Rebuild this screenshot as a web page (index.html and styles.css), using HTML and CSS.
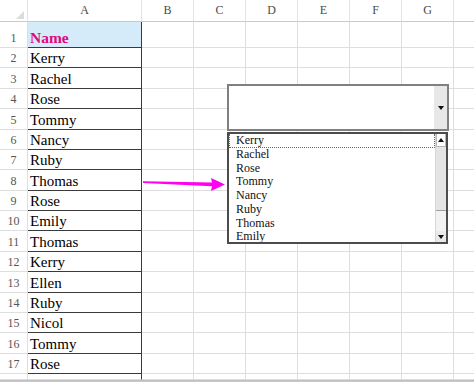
FILE: index.html
```html
<!DOCTYPE html>
<html>
<head>
<meta charset="utf-8">
<link rel="stylesheet" href="styles.css">
</head>
<body>
<div class="sheet">
  <div class="row hdr">
    <div class="corner"><span class="tri"></span></div>
    <div class="ch">A</div><div class="ch">B</div><div class="ch">C</div><div class="ch">D</div><div class="ch">E</div><div class="ch">F</div><div class="ch">G</div><div class="ch last"></div>
  </div>
  <div class="row r1">
    <div class="rh">1</div><div class="a title">Name</div>
    <div class="c"></div><div class="c"></div><div class="c"></div><div class="c"></div><div class="c"></div><div class="c"></div><div class="c last"></div>
  </div>
  <div class="row"><div class="rh">2</div><div class="a">Kerry</div><div class="c"></div><div class="c"></div><div class="c"></div><div class="c"></div><div class="c"></div><div class="c"></div><div class="c last"></div></div>
  <div class="row"><div class="rh">3</div><div class="a">Rachel</div><div class="c"></div><div class="c"></div><div class="c"></div><div class="c"></div><div class="c"></div><div class="c"></div><div class="c last"></div></div>
  <div class="row"><div class="rh">4</div><div class="a">Rose</div><div class="c"></div><div class="c"></div><div class="c"></div><div class="c"></div><div class="c"></div><div class="c"></div><div class="c last"></div></div>
  <div class="row"><div class="rh">5</div><div class="a">Tommy</div><div class="c"></div><div class="c"></div><div class="c"></div><div class="c"></div><div class="c"></div><div class="c"></div><div class="c last"></div></div>
  <div class="row"><div class="rh">6</div><div class="a">Nancy</div><div class="c"></div><div class="c"></div><div class="c"></div><div class="c"></div><div class="c"></div><div class="c"></div><div class="c last"></div></div>
  <div class="row"><div class="rh">7</div><div class="a">Ruby</div><div class="c"></div><div class="c"></div><div class="c"></div><div class="c"></div><div class="c"></div><div class="c"></div><div class="c last"></div></div>
  <div class="row"><div class="rh">8</div><div class="a">Thomas</div><div class="c"></div><div class="c"></div><div class="c"></div><div class="c"></div><div class="c"></div><div class="c"></div><div class="c last"></div></div>
  <div class="row"><div class="rh">9</div><div class="a">Rose</div><div class="c"></div><div class="c"></div><div class="c"></div><div class="c"></div><div class="c"></div><div class="c"></div><div class="c last"></div></div>
  <div class="row"><div class="rh">10</div><div class="a">Emily</div><div class="c"></div><div class="c"></div><div class="c"></div><div class="c"></div><div class="c"></div><div class="c"></div><div class="c last"></div></div>
  <div class="row"><div class="rh">11</div><div class="a">Thomas</div><div class="c"></div><div class="c"></div><div class="c"></div><div class="c"></div><div class="c"></div><div class="c"></div><div class="c last"></div></div>
  <div class="row"><div class="rh">12</div><div class="a">Kerry</div><div class="c"></div><div class="c"></div><div class="c"></div><div class="c"></div><div class="c"></div><div class="c"></div><div class="c last"></div></div>
  <div class="row"><div class="rh">13</div><div class="a">Ellen</div><div class="c"></div><div class="c"></div><div class="c"></div><div class="c"></div><div class="c"></div><div class="c"></div><div class="c last"></div></div>
  <div class="row"><div class="rh">14</div><div class="a">Ruby</div><div class="c"></div><div class="c"></div><div class="c"></div><div class="c"></div><div class="c"></div><div class="c"></div><div class="c last"></div></div>
  <div class="row"><div class="rh">15</div><div class="a">Nicol</div><div class="c"></div><div class="c"></div><div class="c"></div><div class="c"></div><div class="c"></div><div class="c"></div><div class="c last"></div></div>
  <div class="row"><div class="rh">16</div><div class="a">Tommy</div><div class="c"></div><div class="c"></div><div class="c"></div><div class="c"></div><div class="c"></div><div class="c"></div><div class="c last"></div></div>
  <div class="row"><div class="rh">17</div><div class="a">Rose</div><div class="c"></div><div class="c"></div><div class="c"></div><div class="c"></div><div class="c"></div><div class="c"></div><div class="c last"></div></div>
  <div class="row r18"><div class="rh">18</div><div class="a empty"></div><div class="c"></div><div class="c"></div><div class="c"></div><div class="c"></div><div class="c"></div><div class="c"></div><div class="c last"></div></div>
  <div class="bottombar"></div>

  <div class="combo">
    <div class="combo-field"></div>
    <div class="combo-btn"><span class="tri-down"></span></div>
  </div>

  <div class="listbox">
    <div class="items">
      <div class="item focus">Kerry</div>
      <div class="item">Rachel</div>
      <div class="item">Rose</div>
      <div class="item">Tommy</div>
      <div class="item">Nancy</div>
      <div class="item">Ruby</div>
      <div class="item">Thomas</div>
      <div class="item">Emily</div>
    </div>
    <div class="scrollbar">
      <div class="sb-up"><span class="tri-up"></span></div>
      <div class="sb-thumb"></div>
      <div class="sb-track"></div>
      <div class="sb-down"><span class="tri-down"></span></div>
    </div>
  </div>

  <svg class="arrow" width="90" height="20" viewBox="0 0 90 20">
    <path d="M3,7.3 L72,8.6 L71,4 L85,10.5 L71,17 L72,12.2 L3,9 Z" fill="#ff00f0"/>
  </svg>
</div>
</body>
</html>
```
FILE: styles.css
```css
html, body {
  margin: 0;
  padding: 0;
  background: #ffffff;
}
body {
  width: 474px;
  height: 382px;
  overflow: hidden;
  font-family: "Liberation Serif", "Times New Roman", serif;
}
.sheet {
  position: relative;
  width: 474px;
  height: 382px;
  display: flex;
  flex-direction: column;
}
.row {
  display: grid;
  grid-template-columns: 28px 114px 52px 52px 52px 52px 52px 52px 1fr;
  height: 20.375px;
  flex: none;
}
.row > div {
  box-sizing: border-box;
  border-right: 1px solid #dedede;
  border-bottom: 1px solid #dedede;
  min-width: 0;
  overflow: hidden;
}
.row > .last {
  border-right: none;
}
.hdr {
  height: 22px;
}
.hdr > div {
  border-bottom: 1px solid #c9c9c9;
  border-right: 1px solid #e3e3e3;
}
.corner {
  position: relative;
}
.tri {
  position: absolute;
  left: 16px;
  top: 11px;
  width: 0;
  height: 0;
  border-left: 8px solid transparent;
  border-bottom: 8px solid #dcdcdc;
}
.ch {
  display: flex;
  align-items: flex-end;
  justify-content: center;
  font-size: 12px;
  color: #4a4a4a;
  padding-bottom: 3px;
}
.rh {
  display: flex;
  align-items: flex-end;
  justify-content: center;
  font-size: 12px;
  color: #555555;
  padding-bottom: 1px;
}
.r1 {
  height: 26px;
}
.a {
  display: flex;
  align-items: flex-end;
  padding-left: 2px;
  font-size: 15px;
  line-height: 17px;
  color: #000000;
  white-space: nowrap;
}
.row > .a {
  border-right: 1px solid #3a3a3a;
  border-bottom: 1px solid #3a3a3a;
}
.row > .a.empty {
  border-bottom: 1px solid #dedede;
}
.title {
  background: #d5ebfa;
  color: #e2087d;
  font-weight: bold;
  font-size: 15.5px;
  padding-bottom: 1px;
}
.r18 {
  height: 6px;
}
.r18 > .rh {
  align-items: flex-start;
  padding-top: 2px;
  color: #888;
}
.bottombar {
  flex: 1;
  background: linear-gradient(#b9b9b9, #cfcfcf);
}

/* combo box (overlay control) */
.combo {
  position: absolute;
  left: 227px;
  top: 84px;
  width: 222px;
  height: 47px;
  box-sizing: border-box;
  border: 2px solid #808080;
  background: #ffffff;
  display: flex;
}
.combo-field {
  flex: 1;
}
.combo-btn {
  width: 13px;
  background: #e8e8e8;
  display: flex;
  align-items: center;
  justify-content: center;
}
.tri-down {
  width: 0;
  height: 0;
  border-left: 3px solid transparent;
  border-right: 3px solid transparent;
  border-top: 4px solid #111;
}
.tri-up {
  width: 0;
  height: 0;
  border-left: 3px solid transparent;
  border-right: 3px solid transparent;
  border-bottom: 4px solid #111;
}

/* list box (overlay control) */
.listbox {
  position: absolute;
  left: 227px;
  top: 132px;
  width: 221px;
  height: 112px;
  box-sizing: border-box;
  border: 2px solid #4c4c4c;
  background: #ffffff;
  display: flex;
}
.items {
  flex: 1;
  overflow: hidden;
}
.item {
  box-sizing: border-box;
  height: 13.75px;
  line-height: 13.75px;
  font-size: 12px;
  padding-left: 7px;
  color: #111;
  white-space: nowrap;
}
.item.focus {
  border: 1px dotted #666;
  border-top: none;
  padding-left: 6px;
  line-height: 12.75px;
}
.scrollbar {
  width: 10px;
  display: flex;
  flex-direction: column;
  border-left: 1px solid #d6d6d6;
}
.sb-up {
  height: 13px;
  box-sizing: border-box;
  border: 1px solid #b8b8b8;
  border-top: none;
  background: #ffffff;
  display: flex;
  align-items: center;
  justify-content: center;
}
.sb-thumb {
  height: 64px;
  box-sizing: border-box;
  background: #e4e4e4;
  border-bottom: 1px solid #9e9e9e;
}
.sb-track {
  flex: 1;
  background: #f2f2f2;
}
.sb-down {
  height: 11px;
  background: #e9e9e9;
  display: flex;
  align-items: center;
  justify-content: center;
}

.arrow {
  position: absolute;
  left: 140px;
  top: 174px;
}
```
